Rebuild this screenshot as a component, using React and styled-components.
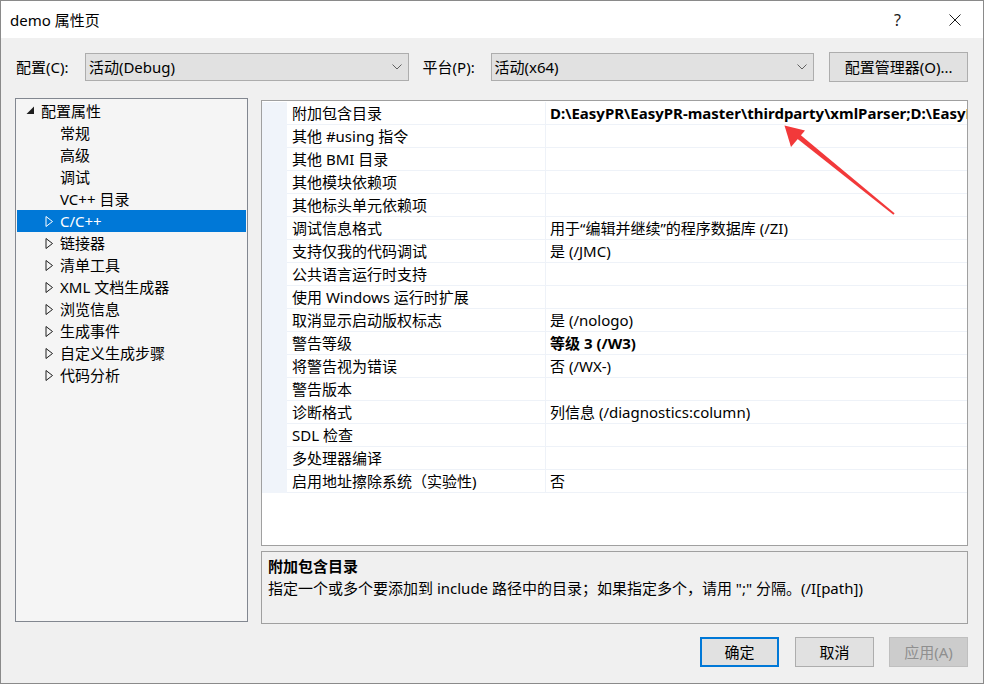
import React from "react";
import styled, { createGlobalStyle } from "styled-components";

const GlobalStyle = createGlobalStyle`
  html, body {
    margin: 0;
    padding: 0;
    background: #f0f0f0;
  }
  body {
    font-family: "Noto Sans", "Noto Sans CJK SC", sans-serif;
    font-size: 15px;
    color: #000;
  }
  * { box-sizing: border-box; }
`;

const Window = styled.div`
  position: relative;
  width: 984px;
  height: 684px;
  border: 1px solid #8a8a8a;
  background: #f0f0f0;
  display: flex;
  flex-direction: column;
  overflow: hidden;
`;

const TitleBar = styled.div`
  height: 37px;
  flex: none;
  background: #fff;
  display: flex;
  align-items: center;
  padding-left: 9px;
`;

const Title = styled.div`
  flex: 1;
  font-size: 15px;
  line-height: 20px;
`;

const CaptionButton = styled.div`
  width: 57px;
  height: 37px;
  display: flex;
  align-items: center;
  justify-content: center;
  font-size: 16px;
  color: #1a1a1a;
`;

const Body = styled.div`
  flex: 1;
  display: flex;
  flex-direction: column;
  padding: 14px 15px 0 14px;
`;

const ConfigRow = styled.div`
  height: 30px;
  display: flex;
  align-items: center;
`;

const FieldLabel = styled.label`
  width: ${(p) => p.$width}px;
  margin-left: ${(p) => p.$offset || 0}px;
  line-height: 20px;
  white-space: nowrap;
`;

const Combo = styled.div`
  position: relative;
  width: 324px;
  height: 28px;
  background: #e1e1e1;
  border: 1px solid #adadad;
  display: flex;
  align-items: center;
  padding-left: 3px;
  line-height: 20px;
`;

const ComboText = styled.span`
  flex: 1;
`;

const ComboArrow = styled.svg`
  width: 10px;
  height: 6px;
  margin-right: 6px;
`;

const PushButton = styled.button`
  font: inherit;
  color: ${(p) => (p.$disabled ? "#8f8f8f" : "#000")};
  width: ${(p) => p.$width || 79}px;
  height: 30px;
  margin-left: ${(p) => p.$gap || 0}px;
  background: ${(p) => (p.$disabled ? "#cccccc" : "#e1e1e1")};
  border: ${(p) =>
    p.$default ? "2px solid #0078d7" : p.$disabled ? "1px solid #bfbfbf" : "1px solid #adadad"};
  padding: 0;
  line-height: 20px;
`;

const Main = styled.div`
  display: flex;
  margin-top: 16px;
  height: 526px;
`;

const Tree = styled.div`
  width: 233px;
  height: 524px;
  flex: none;
  background: #f5f5f5;
  border: 1px solid #828790;
  padding: 1px 0;
`;

const TreeRow = styled.div`
  height: 22px;
  margin: 0 1px;
  display: flex;
  align-items: center;
  padding-left: ${(p) => 7 + p.$level * 19}px;
  background: ${(p) => (p.$selected ? "#0078d7" : "transparent")};
  color: ${(p) => (p.$selected ? "#fff" : "#000")};
  line-height: 20px;
  white-space: nowrap;
`;

const Expander = styled.span`
  width: 17px;
  height: 22px;
  flex: none;
  display: flex;
  align-items: center;
`;

const RightColumn = styled.div`
  flex: 1;
  margin-left: 13px;
  padding-top: 2px;
  display: flex;
  flex-direction: column;
  gap: 5px;
`;

const Grid = styled.div`
  height: 446px;
  background: #fff;
  border: 1px solid #a0a0a0;
  padding-top: 1px;
  overflow: hidden;
`;

const GridRow = styled.div`
  display: grid;
  grid-template-columns: 25px 258px 1fr;
  height: 23px;
`;

const Margin = styled.div`
  background: #f0f4fa;
`;

const NameCell = styled.div`
  border-bottom: 1px solid #eef2f8;
  padding-left: 5px;
  display: flex;
  align-items: center;
  line-height: 20px;
  white-space: nowrap;
`;

const ValueCell = styled.div`
  border-bottom: 1px solid #eef2f8;
  border-left: 1px solid #eef2f8;
  padding-left: 4px;
  display: flex;
  align-items: center;
  line-height: 20px;
  white-space: nowrap;
  overflow: hidden;
  font-weight: ${(p) => (p.$bold ? 700 : 400)};
`;

const Description = styled.div`
  height: 73px;
  background: #f0f0f0;
  border: 1px solid #a0a0a0;
  padding: 3px 6px;
  line-height: 22px;
`;

const DescTitle = styled.div`
  font-weight: 700;
`;

const Footer = styled.div`
  display: flex;
  justify-content: flex-end;
  margin-top: 13px;
`;

const Annotation = styled.svg`
  position: absolute;
  left: 0;
  top: 0;
  width: 984px;
  height: 684px;
  pointer-events: none;
`;

const Chevron = () => (
  <ComboArrow viewBox="0 0 10 6">
    <polyline points="0.5,0.5 5,5 9.5,0.5" fill="none" stroke="#606060" strokeWidth="1" />
  </ComboArrow>
);

const OpenTriangle = () => (
  <svg width="9" height="9" viewBox="0 0 9 9" style={{ marginLeft: 2, marginTop: -1 }}>
    <polygon points="8,0.5 8,8 0.5,8" fill="#1e1e1e" />
  </svg>
);

const ClosedTriangle = ({ color }) => (
  <svg width="9" height="11" viewBox="0 0 9 11" style={{ marginLeft: 2 }}>
    <polygon points="1,0.5 7.5,5.5 1,10.5" fill="none" stroke={color} strokeWidth="1" />
  </svg>
);

const treeItems = [
  { label: "配置属性", level: 0, expander: "open" },
  { label: "常规", level: 1 },
  { label: "高级", level: 1 },
  { label: "调试", level: 1 },
  { label: "VC++ 目录", level: 1 },
  { label: "C/C++", level: 1, expander: "closed", selected: true },
  { label: "链接器", level: 1, expander: "closed" },
  { label: "清单工具", level: 1, expander: "closed" },
  { label: "XML 文档生成器", level: 1, expander: "closed" },
  { label: "浏览信息", level: 1, expander: "closed" },
  { label: "生成事件", level: 1, expander: "closed" },
  { label: "自定义生成步骤", level: 1, expander: "closed" },
  { label: "代码分析", level: 1, expander: "closed" },
];

const properties = [
  ["附加包含目录", "D:\\EasyPR\\EasyPR-master\\thirdparty\\xmlParser;D:\\EasyPR\\EasyPR-master\\include", true],
  ["其他 #using 指令", ""],
  ["其他 BMI 目录", ""],
  ["其他模块依赖项", ""],
  ["其他标头单元依赖项", ""],
  ["调试信息格式", "用于“编辑并继续”的程序数据库 (/ZI)"],
  ["支持仅我的代码调试", "是 (/JMC)"],
  ["公共语言运行时支持", ""],
  ["使用 Windows 运行时扩展", ""],
  ["取消显示启动版权标志", "是 (/nologo)"],
  ["警告等级", "等级 3 (/W3)", true],
  ["将警告视为错误", "否 (/WX-)"],
  ["警告版本", ""],
  ["诊断格式", "列信息 (/diagnostics:column)"],
  ["SDL 检查", ""],
  ["多处理器编译", ""],
  ["启用地址擦除系统（实验性)", "否"],
];

export default function App() {
  return (
    <>
      <GlobalStyle />
      <Window>
        <TitleBar>
          <Title>demo 属性页</Title>
          <CaptionButton>?</CaptionButton>
          <CaptionButton>
            <svg width="12" height="12" viewBox="0 0 12 12">
              <path d="M0.5 0.5 L11.5 11.5 M11.5 0.5 L0.5 11.5" stroke="#1a1a1a" strokeWidth="1" />
            </svg>
          </CaptionButton>
        </TitleBar>
        <Body>
          <ConfigRow>
            <FieldLabel $width={69} $offset={1}>配置(C):</FieldLabel>
            <Combo>
              <ComboText>活动(Debug)</ComboText>
              <Chevron />
            </Combo>
            <FieldLabel $width={68} $offset={14}>平台(P):</FieldLabel>
            <Combo>
              <ComboText>活动(x64)</ComboText>
              <Chevron />
            </Combo>
            <PushButton $width={139} $gap={15}>配置管理器(O)...</PushButton>
          </ConfigRow>
          <Main>
            <Tree>
              {treeItems.map((item) => (
                <TreeRow key={item.label} $level={item.level} $selected={item.selected}>
                  <Expander>
                    {item.expander === "open" && <OpenTriangle />}
                    {item.expander === "closed" && (
                      <ClosedTriangle color={item.selected ? "#fff" : "#1e1e1e"} />
                    )}
                  </Expander>
                  {item.label}
                </TreeRow>
              ))}
            </Tree>
            <RightColumn>
              <Grid>
                {properties.map(([name, value, bold]) => (
                  <GridRow key={name}>
                    <Margin />
                    <NameCell>{name}</NameCell>
                    <ValueCell $bold={bold}>{value}</ValueCell>
                  </GridRow>
                ))}
              </Grid>
              <Description>
                <DescTitle>附加包含目录</DescTitle>
                <div>指定一个或多个要添加到 include 路径中的目录；如果指定多个，请用 ";" 分隔。(/I[path])</div>
              </Description>
            </RightColumn>
          </Main>
          <Footer>
            <PushButton $default>确定</PushButton>
            <PushButton $gap={16}>取消</PushButton>
            <PushButton $gap={15} $disabled>应用(A)</PushButton>
          </Footer>
        </Body>
        <Annotation viewBox="0 0 984 684">
          <polygon points="893.6,212.2 892.4,213.8 796,137.5 799,133.5" fill="#f2393a" />
          <polygon points="783.5,124.5 804,129.5 790,146" fill="#f2393a" />
        </Annotation>
      </Window>
    </>
  );
}
